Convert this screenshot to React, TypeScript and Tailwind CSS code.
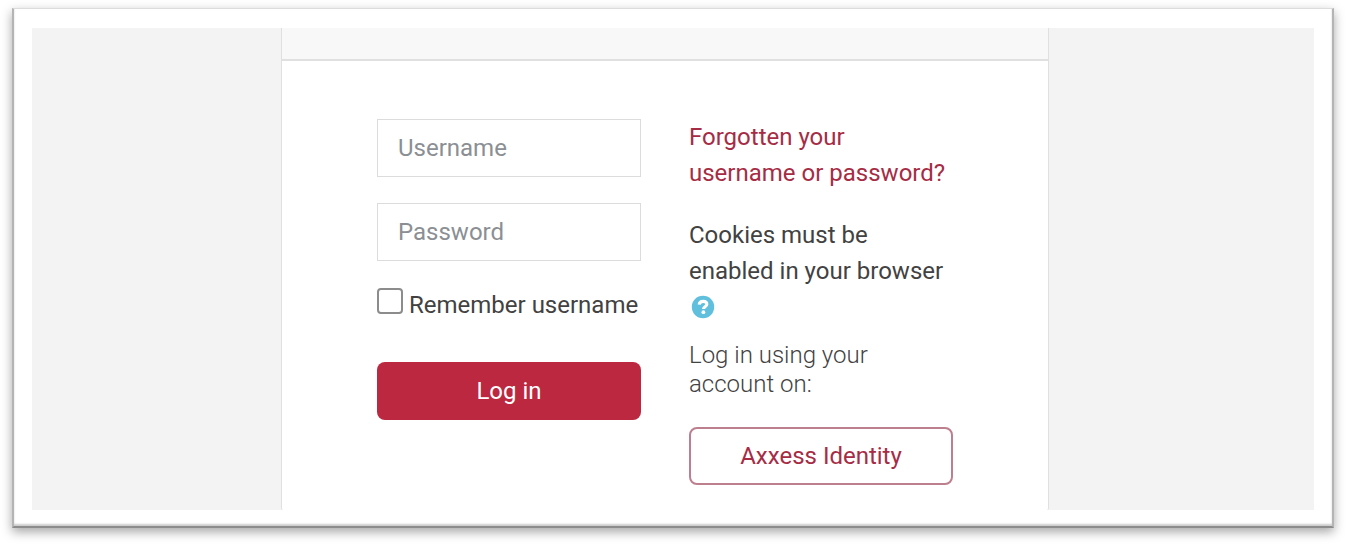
const fieldClass =
  'block w-full h-[58px] px-5 border border-[#dcdcdc] bg-white text-2xl text-[#424242] placeholder:text-[#8b8f94] focus:outline-none focus:border-[#bb2840]';

function HelpIcon() {
  return (
    <svg viewBox="0 0 24 24" className="h-6 w-6" aria-hidden="true">
      <circle cx="12" cy="12" r="11.2" fill="#5fbfdc" />
      <path
        d="M8.2 9.6c.2-2.1 1.7-3.3 3.9-3.3 2.2 0 3.7 1.2 3.7 3 0 2.5-3.3 2.4-3.3 4.6"
        fill="none"
        stroke="#fff"
        strokeWidth="3.2"
      />
      <circle cx="12.4" cy="17.2" r="1.9" fill="#fff" />
    </svg>
  );
}

function LoginForm() {
  return (
    <form onSubmit={(e) => e.preventDefault()}>
      <input type="text" aria-label="Username" placeholder="Username" className={fieldClass} />
      <input type="password" aria-label="Password" placeholder="Password" className={`${fieldClass} mt-[26px]`} />

      <div className="mt-[26px] flex items-center gap-1.5">
        <input
          id="remember"
          type="checkbox"
          className="mb-2 h-[26px] w-[26px] shrink-0 appearance-none rounded border-2 border-[#8c8c8c] bg-white checked:bg-[#bb2840]"
        />
        <label htmlFor="remember" className="whitespace-nowrap leading-9">Remember username</label>
      </div>

      <button type="submit" className="mt-[39px] h-[58px] w-full rounded-lg bg-[#bb2840] text-white">
        Log in
      </button>
    </form>
  );
}

function LoginHelp() {
  return (
    <div>
      <p className="leading-9">
        <a href="#forgot" className="text-[#a62c45]">Forgotten your username or password?</a>
      </p>
      <div className="mt-[26px] leading-9">
        Cookies must be enabled in your browser
        <button type="button" aria-label="Help with cookies" className="ml-0.5 flex h-9 items-center">
          <HelpIcon />
        </button>
      </div>
      <h2 className="mt-4 pr-12 font-light leading-[29px]">Log in using your account on:</h2>
      <a
        href="#identity"
        className="mt-7 flex h-[58px] items-center justify-center rounded-lg border-2 border-[#bd7f8d] text-[#a62c45]"
      >
        Axxess Identity
      </a>
    </div>
  );
}

export default function App() {
  return (
    <div className="bg-white px-3 pt-2 pb-4 font-['Roboto',sans-serif] text-2xl text-[#424242]">
      <div className="border-2 border-t border-[#b4b4b4] border-t-[#dcdcdc] border-b-[#8c8c8c] bg-white px-[18px] pt-[19px] pb-4 shadow-[0_4px_10px_rgba(0,0,0,0.35),inset_0_-2px_2px_rgba(0,0,0,0.2)]">
        <main className="flex justify-center bg-[#f3f3f3] pr-4">
          <div className="w-full max-w-[768px] overflow-hidden rounded-b-xs border-x border-[#e0e0e0] bg-white">
            <div className="h-[33px] border-b-2 border-[#e0e0e0] bg-[#f8f8f8]" />
            <div className="mx-auto grid max-w-[576px] grid-cols-1 gap-12 pt-[58px] pb-[25px] sm:grid-cols-2">
              <LoginForm />
              <LoginHelp />
            </div>
          </div>
        </main>
      </div>
    </div>
  );
}
